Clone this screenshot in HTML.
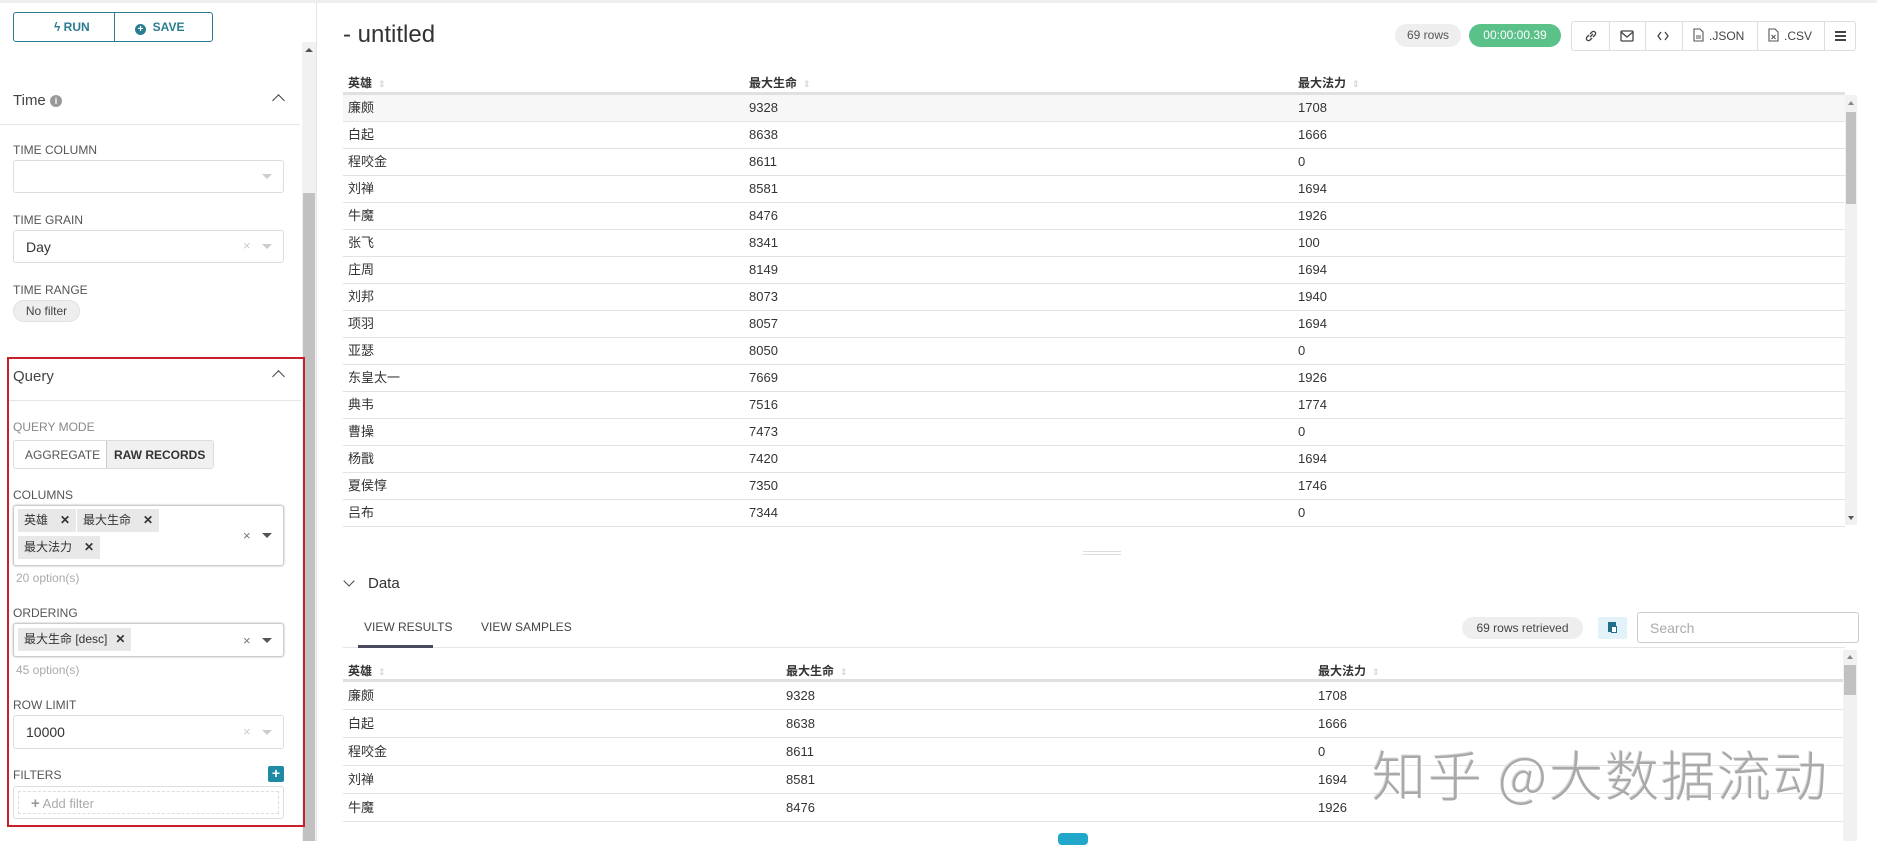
<!DOCTYPE html>
<html><head><meta charset="utf-8"><style>
*{box-sizing:border-box;margin:0;padding:0}
body{width:1877px;height:841px;overflow:hidden;background:#fff;font-family:"Liberation Sans","Noto Sans CJK SC",sans-serif;color:#333;position:relative;font-size:13px}
.a{position:absolute}
.lbl{position:absolute;left:13px;font-size:12px;color:#555}
.sel{position:absolute;left:13px;width:271px;border:1px solid #ddd;border-radius:3px;background:#fff}
.x{position:absolute;color:#aaa;font-size:13px}
.car{position:absolute;width:0;height:0;border-left:5px solid transparent;border-right:5px solid transparent;border-top:5px solid #999}
.tag{position:absolute;background:#e8e8e8;font-size:12px;height:23px;line-height:23px;padding:0 6px;color:#333}
.tag b{margin-left:12px;font-size:12px}
.row{position:absolute;left:343px;border-bottom:1px solid #e3e3e3;font-size:13px;color:#333}
.row span{position:absolute;top:0;line-height:26px}
.r2 span{line-height:27px}
.hd{position:absolute;font-size:12px;font-weight:bold;color:#333}
.hd i{font-style:normal;color:#ccc;font-weight:normal;font-size:9px;margin-left:6px}
</style></head><body>
<div class="a" style="left:0;top:0;width:1877px;height:3px;background:#eee"></div>
<div class="a" style="left:316px;top:3px;width:1px;height:838px;background:#e5e5e5"></div>
<div class="a" style="left:13px;top:12px;width:200px;height:30px;border:1px solid #2a7c92;border-radius:3px;color:#2a7c92;font-size:12px;font-weight:bold">
<div class="a" style="left:100px;top:0;width:1px;height:28px;background:#2a7c92"></div>
<div class="a" style="left:40px;top:7px">&#x03DF; RUN</div>
<div class="a" style="left:121px;top:7px"><span style="display:inline-block;width:11px;height:11px;border-radius:50%;background:#2a7c92;color:#fff;font-size:10px;line-height:11px;text-align:center;vertical-align:-1px">+</span> &nbsp;SAVE</div>
</div>
<div class="a" style="left:302px;top:42px;width:14px;height:799px;background:#f1f1f1"></div>
<div class="a" style="left:303px;top:193px;width:12px;height:648px;background:#c1c1c1"></div>
<div class="a" style="left:305px;top:48px;border-left:4px solid transparent;border-right:4px solid transparent;border-bottom:4px solid #555"></div>
<div class="a" style="left:13px;top:92px;font-size:15px;color:#444">Time <span style="display:inline-block;width:12px;height:12px;border-radius:50%;background:#999;color:#fff;font-size:9px;text-align:center;line-height:12px;font-weight:bold;vertical-align:1px">i</span></div>
<div class="a" style="left:274px;top:96px;width:9px;height:9px;border-left:1.5px solid #444;border-top:1.5px solid #444;transform:rotate(45deg)"></div>
<div class="a" style="left:0;top:124px;width:300px;height:1px;background:#e5e5e5"></div>
<div class="lbl" style="top:143px">TIME COLUMN</div>
<div class="sel" style="top:160px;height:33px"></div><div class="car" style="left:262px;top:174px;border-top-color:#ccc"></div>
<div class="lbl" style="top:213px">TIME GRAIN</div>
<div class="sel" style="top:230px;height:33px"><span class="a" style="left:12px;top:8px;font-size:14px">Day</span></div>
<div class="x" style="left:243px;top:238px;color:#ccc">×</div><div class="car" style="left:262px;top:244px;border-top-color:#ccc"></div>
<div class="lbl" style="top:283px">TIME RANGE</div>
<div class="a" style="left:13px;top:300px;width:67px;height:22px;border-radius:11px;background:#eee;border:1px solid #e0e0e0;font-size:12px;line-height:20px;text-align:center;color:#444">No filter</div>
<div class="a" style="left:7px;top:357px;width:298px;height:470px;border:2px solid #c8202a"></div>
<div class="a" style="left:13px;top:368px;font-size:15px;color:#444">Query</div>
<div class="a" style="left:274px;top:372px;width:9px;height:9px;border-left:1.5px solid #444;border-top:1.5px solid #444;transform:rotate(45deg)"></div>
<div class="a" style="left:9px;top:400px;width:292px;height:1px;background:#e5e5e5"></div>
<div class="lbl" style="top:420px;color:#888">QUERY MODE</div>
<div class="a" style="left:13px;top:440px;width:201px;height:29px;border:1px solid #ddd;border-radius:3px;font-size:12px">
<span class="a" style="left:11px;top:7px;color:#555">AGGREGATE</span>
<div class="a" style="left:92px;top:0;width:107px;height:27px;background:#f0f0f0;border-left:1px solid #ccc"></div>
<span class="a" style="left:100px;top:7px;color:#333;font-weight:bold">RAW RECORDS</span></div>
<div class="lbl" style="top:488px">COLUMNS</div>
<div class="sel" style="top:505px;height:61px;border-color:#ccc;box-shadow:0 0 2px #bbb"></div>
<div class="tag" style="left:18px;top:509px">英雄<b>✕</b></div>
<div class="tag" style="left:77px;top:509px">最大生命<b>✕</b></div>
<div class="tag" style="left:18px;top:536px">最大法力<b>✕</b></div>
<div class="x" style="left:243px;top:528px;color:#777">×</div><div class="car" style="left:262px;top:533px;border-top-color:#555"></div>
<div class="a" style="left:16px;top:571px;font-size:12px;color:#aaa">20 option(s)</div>
<div class="lbl" style="top:606px">ORDERING</div>
<div class="sel" style="top:623px;height:34px;border-color:#ccc;box-shadow:0 0 2px #bbb"></div>
<div class="tag" style="left:18px;top:628px">最大生命 [desc]<b style="margin-left:8px">✕</b></div>
<div class="x" style="left:243px;top:633px;color:#777">×</div><div class="car" style="left:262px;top:638px;border-top-color:#555"></div>
<div class="a" style="left:16px;top:663px;font-size:12px;color:#aaa">45 option(s)</div>
<div class="lbl" style="top:698px">ROW LIMIT</div>
<div class="sel" style="top:715px;height:34px"><span class="a" style="left:12px;top:8px;font-size:14px">10000</span></div>
<div class="x" style="left:243px;top:724px;color:#ccc">×</div><div class="car" style="left:262px;top:730px;border-top-color:#ccc"></div>
<div class="lbl" style="top:768px">FILTERS</div>
<div class="a" style="left:268px;top:766px;width:16px;height:16px;background:#1f8aa5;border-radius:2px;color:#fff;font-size:14px;line-height:15px;text-align:center;font-weight:bold">+</div>
<div class="sel" style="top:786px;height:33px"><div class="a" style="left:4px;top:4px;right:4px;bottom:4px;border:1px dashed #ddd"></div><span class="a" style="left:17px;top:8px;color:#aaa;font-size:13px"><b style="font-size:15px;color:#999">+</b> Add filter</span></div>
<div class="a" style="left:343px;top:21px;font-size:24px;color:#333">- untitled</div>
<div class="a" style="left:1395px;top:24px;width:66px;height:23px;border-radius:12px;background:#eee;font-size:12px;line-height:23px;text-align:center;color:#555">69 rows</div>
<div class="a" style="left:1469px;top:24px;width:92px;height:23px;border-radius:12px;background:#5ac189;font-size:12px;line-height:23px;text-align:center;color:#fff">00:00:00.39</div>
<div class="a" style="left:1571px;top:21px;width:285px;height:30px;border:1px solid #ddd;border-radius:3px;font-size:12px;color:#444">
<div class="a" style="left:37px;top:0;width:1px;height:28px;background:#ddd"></div>
<div class="a" style="left:73px;top:0;width:1px;height:28px;background:#ddd"></div>
<div class="a" style="left:110px;top:0;width:1px;height:28px;background:#ddd"></div>
<div class="a" style="left:185px;top:0;width:1px;height:28px;background:#ddd"></div>
<div class="a" style="left:252px;top:0;width:1px;height:28px;background:#ddd"></div>
<svg class="a" style="left:12px;top:7px" width="14" height="14" viewBox="0 0 14 14" fill="none" stroke="#444" stroke-width="1.3"><path d="M6 8l3-3M5 6L3 8a2 2 0 003 3l2-2M9 8l2-2a2 2 0 00-3-3L6 5"/></svg>
<svg class="a" style="left:48px;top:8px" width="14" height="12" viewBox="0 0 14 12" fill="none" stroke="#444" stroke-width="1.3"><rect x="1" y="1" width="12" height="10" rx="1"/><path d="M1 2l6 5 6-5"/></svg>
<svg class="a" style="left:85px;top:9px" width="12" height="10" viewBox="0 0 12 10" fill="none" stroke="#444" stroke-width="1.3"><path d="M4 1L1 5l3 4M8 1l3 4-3 4"/></svg>
<svg class="a" style="left:121px;top:6px" width="11" height="14" viewBox="0 0 11 14" fill="none" stroke="#555" stroke-width="1.1"><path d="M1 1h6l3 3v9H1z M3 8h5M3 10h5"/></svg>
<span class="a" style="left:137px;top:7px">.JSON</span>
<svg class="a" style="left:196px;top:6px" width="11" height="14" viewBox="0 0 11 14" fill="none" stroke="#555" stroke-width="1.1"><path d="M1 1h6l3 3v9H1z M3.5 7l4 4M7.5 7l-4 4"/></svg>
<span class="a" style="left:212px;top:7px">.CSV</span>
<div class="a" style="left:263px;top:9px;width:11px;height:2px;background:#444;box-shadow:0 4px 0 #444,0 8px 0 #444"></div>
</div>
<div class="hd" style="left:348px;top:74px">英雄<i>⇕</i></div>
<div class="hd" style="left:749px;top:74px">最大生命<i>⇕</i></div>
<div class="hd" style="left:1298px;top:74px">最大法力<i>⇕</i></div>
<div class="a" style="left:343px;top:92px;width:1502px;height:3px;background:#e0e0e0"></div>
<div class="a" style="left:1845px;top:95px;width:12px;height:430px;background:#f1f1f1"></div>
<div class="a" style="left:1846px;top:112px;width:10px;height:92px;background:#c1c1c1"></div>
<div class="a" style="left:1848px;top:101px;border-left:3px solid transparent;border-right:3px solid transparent;border-bottom:4px solid #888"></div>
<div class="a" style="left:1848px;top:516px;border-left:3px solid transparent;border-right:3px solid transparent;border-top:4px solid #555"></div>
<div id="t1"></div>
<div class="a" style="left:1083px;top:551px;width:38px;height:1px;background:#ddd;box-shadow:0 3px 0 #ddd"></div>
<div class="a" style="left:345px;top:577px;width:8px;height:8px;border-right:1.3px solid #444;border-bottom:1.3px solid #444;transform:rotate(45deg)"></div>
<div class="a" style="left:368px;top:575px;font-size:15px;color:#333">Data</div>
<div class="a" style="left:364px;top:620px;font-size:12px;color:#444">VIEW RESULTS</div>
<div class="a" style="left:481px;top:620px;font-size:12px;color:#444">VIEW SAMPLES</div>
<div class="a" style="left:343px;top:647px;width:1502px;height:1px;background:#e5e5e5"></div>
<div class="a" style="left:358px;top:645px;width:75px;height:3px;background:#484a5c"></div>
<div class="a" style="left:1462px;top:617px;width:121px;height:22px;border-radius:11px;background:#eee;font-size:12px;line-height:22px;text-align:center;color:#444">69 rows retrieved</div>
<div class="a" style="left:1598px;top:617px;width:29px;height:22px;background:#e3f2f8;border-radius:2px"><div class="a" style="left:10px;top:5px;width:8px;height:10px;background:#1f6e8a"></div><div class="a" style="left:13px;top:9px;width:6px;height:7px;background:#fff;border:1px solid #1f6e8a"></div></div>
<div class="a" style="left:1637px;top:612px;width:222px;height:31px;border:1px solid #ccc;border-radius:3px;font-size:14px;color:#aaa;padding:7px 0 0 12px">Search</div>
<div class="hd" style="left:348px;top:662px">英雄<i>⇕</i></div>
<div class="hd" style="left:786px;top:662px">最大生命<i>⇕</i></div>
<div class="hd" style="left:1318px;top:662px">最大法力<i>⇕</i></div>
<div class="a" style="left:343px;top:679px;width:1502px;height:3px;background:#e0e0e0"></div>
<div class="a" style="left:1843px;top:650px;width:14px;height:191px;background:#f1f1f1"></div>
<div class="a" style="left:1844px;top:665px;width:12px;height:30px;background:#c1c1c1"></div>
<div class="a" style="left:1847px;top:655px;border-left:3px solid transparent;border-right:3px solid transparent;border-bottom:4px solid #888"></div>
<div id="t2"></div>
<div class="a" style="left:1058px;top:833px;width:30px;height:12px;background:#20a7c9;border-radius:4px"></div>
<div class="a" style="left:1372px;top:733px;font-size:54px;color:#a9a9a9;letter-spacing:2px;text-shadow:1px 1px 0 #fff,-1px -1px 0 #ddd;font-family:'Noto Sans CJK SC',sans-serif;font-weight:300">知乎 @大数据流动</div>
<script>
var d=[["廉颇",9328,1708],["白起",8638,1666],["程咬金",8611,0],["刘禅",8581,1694],["牛魔",8476,1926],["张飞",8341,100],["庄周",8149,1694],["刘邦",8073,1940],["项羽",8057,1694],["亚瑟",8050,0],["东皇太一",7669,1926],["典韦",7516,1774],["曹操",7473,0],["杨戬",7420,1694],["夏侯惇",7350,1746],["吕布",7344,0]];
var h="";
d.forEach(function(r,i){h+='<div class="row" style="top:'+(95+i*27)+'px;width:1502px;height:27px;'+(i==0?'background:#f7f7f7':'')+'"><span style="left:5px">'+r[0]+'</span><span style="left:406px">'+r[1]+'</span><span style="left:955px">'+r[2]+'</span></div>';});
document.getElementById("t1").outerHTML=h;
h="";
for(var i=0;i<5;i++){var r=d[i];h+='<div class="row r2" style="top:'+(682+i*28)+'px;width:1500px;height:28px"><span style="left:5px">'+r[0]+'</span><span style="left:443px">'+r[1]+'</span><span style="left:975px">'+r[2]+'</span></div>';}
document.getElementById("t2").outerHTML=h;
</script>
</body></html>
